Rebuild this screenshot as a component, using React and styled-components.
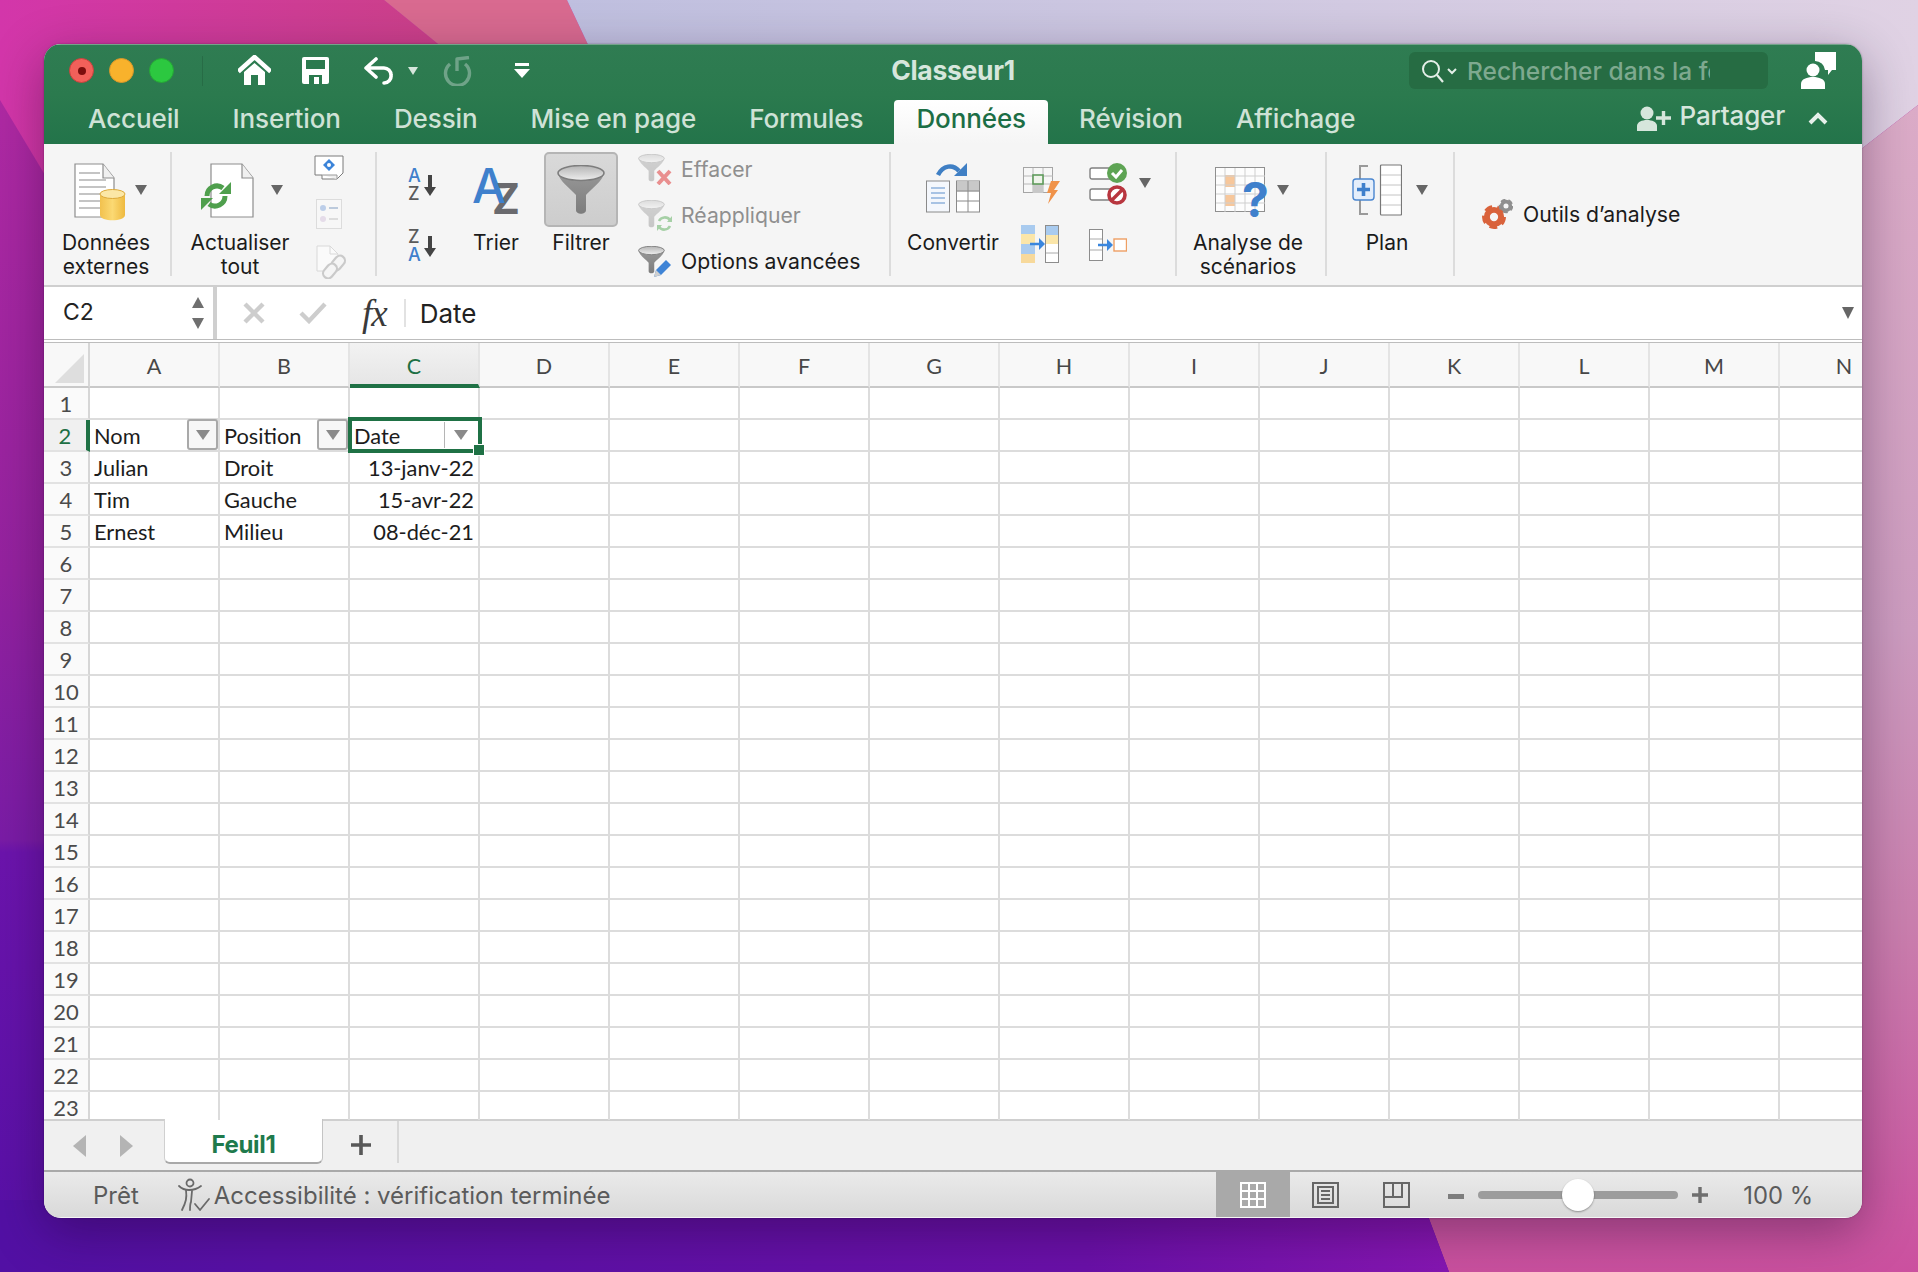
import React from "react";
import styled, { createGlobalStyle } from "styled-components";

const UI = `Inter, "Liberation Sans", sans-serif`;
const CELL = `Lato, "Liberation Sans", sans-serif`;

const Global = createGlobalStyle`
  html, body { margin: 0; padding: 0; }
  body { width: 1918px; height: 1272px; overflow: hidden; font-family: ${UI}; }
  #root { width: 1918px; height: 1272px; }
`;

const Desktop = styled.div`
  box-sizing: border-box;
  width: 1918px;
  height: 1272px;
  padding: 44px 56px 54px 44px;
  position: relative;
  overflow: hidden;
`;
const WallpaperSvg = styled.svg`
  position: absolute;
  inset: 0;
`;
const Win = styled.div`
  position: relative;
  display: flex;
  flex-direction: column;
  height: 1174px;
  border-radius: 17px;
  overflow: hidden;
  background: #f5f5f5;
  box-shadow: 0 14px 50px rgba(30, 0, 40, 0.38), 0 0 2px rgba(0, 0, 0, 0.35);
`;

/* ---------- green header ---------- */
const Header = styled.header`
  background: linear-gradient(#2f7c52 0%, #2b7a4e 50%, #23744a 100%);
  border-top: 1px solid #74a48b;
`;
const TitleBar = styled.div`
  display: grid;
  grid-template-columns: 1fr auto 1fr;
  align-items: center;
  height: 55px;
  box-sizing: border-box;
  padding-bottom: 4px;
`;
const TitleLeft = styled.div`
  display: flex;
  align-items: center;
  padding-left: 25px;
`;
const Light = styled.span`
  width: 25px;
  height: 25px;
  border-radius: 50%;
  background: ${(p) => p.$c};
  border: 1px solid ${(p) => p.$b};
  box-sizing: border-box;
  margin-right: 15px;
  display: flex;
  align-items: center;
  justify-content: center;
`;
const LightDot = styled.span`
  width: 8px;
  height: 8px;
  border-radius: 50%;
  background: #7c0d0d;
`;
const Sep = styled.span`
  width: 1px;
  height: 30px;
  background: rgba(0, 0, 0, 0.12);
  margin: 0 35px 0 13px;
`;
const Slot = styled.span`
  display: block;
  flex: none;
  line-height: 0;
  margin: ${(p) => p.$y || 0}px 0 0 ${(p) => p.$x || 0}px;
`;
const Title = styled.div`
  font-size: 26.5px;
  font-weight: 700;
  color: #d6e6dc;
  letter-spacing: -0.3px;
  margin-bottom: 1px;
`;
const TitleRight = styled.div`
  display: flex;
  align-items: center;
  justify-content: flex-end;
  padding-right: 25px;
`;
const Search = styled.div`
  display: flex;
  align-items: center;
  box-sizing: border-box;
  width: 359px;
  height: 37px;
  background: #266c43;
  border-radius: 6px;
  padding: 0 0 0 12px;
  margin-right: 33px;
`;
const SearchText = styled.span`
  display: block;
  width: 243px;
  overflow: hidden;
  white-space: nowrap;
  font-size: 24.5px;
  font-weight: 500;
  color: #7ea98f;
  margin-left: 8px;
`;
const TabRow = styled.nav`
  display: flex;
  align-items: flex-end;
  gap: 9px;
  height: 44px;
  padding-left: 22px;
`;
const Tab = styled.div`
  box-sizing: border-box;
  height: 44px;
  padding: 1px 22px 0;
  font-size: 26px;
  font-weight: 500;
  line-height: 36px;
  color: ${(p) => (p.$active ? "#1c6e45" : "#cfe2d6")};
  background: ${(p) => (p.$active ? "linear-gradient(#ffffff, #f5f5f5)" : "transparent")};
  border-radius: 4px 4px 0 0;
  letter-spacing: -0.1px;
  white-space: nowrap;
`;
const ShareArea = styled.div`
  display: flex;
  align-items: center;
  margin-left: auto;
  height: 44px;
  padding: 0 34px 4px 0;
`;
const ShareText = styled.span`
  font-size: 26px;
  font-weight: 500;
  color: #d6e6dc;
  margin: 0 23px 5px 9px;
  letter-spacing: -0.2px;
`;

/* ---------- ribbon ---------- */
const Ribbon = styled.section`
  display: flex;
  height: 143px;
  box-sizing: border-box;
  padding-top: 8px;
  background: #f5f5f5;
  border-bottom: 2px solid #cfcfcf;
`;
const Group = styled.div`
  display: flex;
  flex: none;
  box-sizing: border-box;
  width: ${(p) => p.$w}px;
  height: 124px;
  border-right: ${(p) => (p.$last ? "none" : "2px solid #dcdcdc")};
`;
const Big = styled.div`
  display: flex;
  flex-direction: column;
  flex: none;
  width: ${(p) => p.$w}px;
  margin-left: ${(p) => p.$ml || 0}px;
`;
const IconRow = styled.div`
  display: flex;
  flex: none;
  height: 79px;
  align-items: flex-start;
  border-radius: 5px;
  box-sizing: border-box;
`;
const ActiveBox = styled.div`
  display: flex;
  flex: none;
  justify-content: center;
  align-items: center;
  box-sizing: border-box;
  height: 75px;
  margin-bottom: 4px;
  background: linear-gradient(#d9d9d9, #cdcdcd);
  border: 2px solid #b5b5b5;
  border-radius: 5px;
`;
const Label = styled.div`
  font-size: 21px;
  line-height: 24px;
  color: #1b1b1b;
  text-align: center;
  white-space: nowrap;
`;
const Caret = styled.span`
  display: block;
  flex: none;
  width: 0;
  height: 0;
  border-left: 6px solid transparent;
  border-right: 6px solid transparent;
  border-top: 10px solid #666;
  margin: ${(p) => p.$y}px 0 0 ${(p) => p.$x}px;
`;
const SmallCol = styled.div`
  display: flex;
  flex-direction: column;
  margin-left: ${(p) => p.$ml}px;
`;
const ActionCol = styled.div`
  display: grid;
  grid-auto-rows: 46px;
  margin: -6px 0 0 ${(p) => p.$ml}px;
`;
const ActionRow = styled.div`
  display: flex;
  align-items: center;
  gap: 9px;
`;
const ActionText = styled.span`
  font-size: 21.2px;
  color: ${(p) => (p.$off ? "#8f8f8f" : "#1b1b1b")};
  white-space: nowrap;
`;
const ToolsItem = styled.div`
  display: flex;
  align-items: center;
  gap: 10px;
  height: 124px;
  padding: 0 0 0 27px;
`;

/* ---------- formula bar ---------- */
const FormulaBar = styled.section`
  display: flex;
  align-items: stretch;
  height: 56px;
  box-sizing: border-box;
  background: #fff;
  border-bottom: 4px double #bdbdbd;
`;
const NameBox = styled.div`
  display: flex;
  align-items: center;
  justify-content: space-between;
  box-sizing: border-box;
  width: 172px;
  margin-left: 1px;
  padding: 0 9px 0 18px;
  border-right: 4px solid #cfcfcf;
  background: #fff;
`;
const NameText = styled.span`
  font-size: 23px;
  color: #222;
  margin-bottom: 2px;
`;
const Stepper = styled.div`
  display: flex;
  flex-direction: column;
  gap: 10px;
`;
const StepTri = styled.span`
  display: block;
  width: 0;
  height: 0;
  border-left: 6.5px solid transparent;
  border-right: 6.5px solid transparent;
  ${(p) => (p.$down ? "border-top: 11px solid #6f6f6f;" : "border-bottom: 11px solid #6f6f6f;")}
`;
const FormulaTools = styled.div`
  display: flex;
  align-items: center;
  padding-left: 26px;
`;
const FxText = styled.span`
  font-family: "Liberation Serif", serif;
  font-style: italic;
  font-size: 37px;
  color: #3a3a3a;
  margin-left: 35px;
  letter-spacing: -1px;
  line-height: 1;
`;
const FxSep = styled.span`
  width: 2px;
  height: 28px;
  background: #e2e2e2;
  margin: 0 14px 0 17px;
`;
const FormulaValue = styled.span`
  font-size: 26px;
  color: #222;
  align-self: center;
`;
const FormulaCaret = styled.span`
  margin: auto 8px auto auto;
  width: 0;
  height: 0;
  border-left: 6.5px solid transparent;
  border-right: 6.5px solid transparent;
  border-top: 12px solid #666;
`;

/* ---------- sheet ---------- */
const Sheet = styled.section`
  height: 777px;
  overflow: hidden;
  background: #fff;
  font-family: ${CELL};
`;
const Row = styled.div`
  display: grid;
  grid-template-columns: 46px repeat(14, 130px);
  height: ${(p) => p.$h || 32}px;
`;
const ColHead = styled.div`
  box-sizing: border-box;
  display: flex;
  align-items: center;
  justify-content: center;
  font-size: 21.5px;
  color: ${(p) => (p.$on ? "#1d7044" : "#474747")};
  background: ${(p) => (p.$on ? "linear-gradient(#f2f2f2,#e6e6e6)" : "#f8f8f8")};
  border-right: 2px solid #e4e4e4;
  border-bottom: ${(p) => (p.$on ? "4px solid #1f7145" : "2px solid #c9c9c9")};
  padding-top: ${(p) => (p.$on ? 4 : 2)}px;
`;
const Corner = styled.div`
  box-sizing: border-box;
  display: flex;
  align-items: flex-end;
  justify-content: flex-end;
  background: #f8f8f8;
  border-right: 2px solid #d6d6d6;
  border-bottom: 2px solid #c9c9c9;
  padding: 0 4px 3px 0;
`;
const RowHead = styled.div`
  box-sizing: border-box;
  display: flex;
  align-items: center;
  justify-content: center;
  font-size: 22px;
  color: ${(p) => (p.$on ? "#1d7044" : "#4b4b4b")};
  background: ${(p) => (p.$on ? "#f0f0f0" : "#fafafa")};
  border-right: ${(p) => (p.$on ? "4px solid #1f7145" : "2px solid #d6d6d6")};
  border-bottom: 2px solid #e2e2e2;
`;
const Cell = styled.div`
  box-sizing: border-box;
  position: relative;
  display: flex;
  align-items: center;
  justify-content: ${(p) => (p.$right ? "flex-end" : "flex-start")};
  padding: 0 4px;
  font-size: 21.8px;
  color: #1c1c1c;
  white-space: nowrap;
  border-right: 2px solid #dcdcdc;
  border-bottom: 2px solid #dcdcdc;
`;
const FilterBtn = styled.span`
  position: absolute;
  right: 0;
  top: -1px;
  box-sizing: border-box;
  width: 31px;
  height: 31px;
  display: flex;
  align-items: center;
  justify-content: center;
  background: #f7f7f7;
  border: 2px solid #a9a9a9;
  border-radius: 3px;
`;
const FilterPlain = styled.span`
  position: absolute;
  right: 1px;
  top: 2px;
  width: 32px;
  height: 26px;
  display: flex;
  align-items: center;
  justify-content: center;
  border-left: 1.5px solid #b5b5b5;
`;
const FilterTri = styled.span`
  display: block;
  width: 0;
  height: 0;
  border-left: 7.5px solid transparent;
  border-right: 7.5px solid transparent;
  border-top: 10px solid #8a8a8a;
`;
const Selection = styled.span`
  position: absolute;
  z-index: 3;
  left: -2px;
  top: -3px;
  width: 134px;
  height: 36px;
  box-sizing: border-box;
  border: 4px solid #1f7145;
  pointer-events: none;
`;
const Handle = styled.span`
  position: absolute;
  right: -6px;
  bottom: -6px;
  width: 10px;
  height: 10px;
  background: #1f7145;
  outline: 1px solid #fff;
`;

/* ---------- sheet tabs ---------- */
const SheetBar = styled.section`
  display: flex;
  align-items: flex-start;
  height: 53px;
  box-sizing: border-box;
  background: #f0f0f0;
  border-top: 2px solid #cfcfcf;
  border-bottom: 2px solid #a9a9a9;
  margin-top: -1px;
`;
const NavArrow = styled.span`
  width: 0;
  height: 0;
  align-self: center;
  margin-left: ${(p) => p.$ml}px;
  border-top: 11px solid transparent;
  border-bottom: 11px solid transparent;
  ${(p) => (p.$right ? "border-left: 13px solid #b4b4b4;" : "border-right: 13px solid #b4b4b4;")}
`;
const SheetTab = styled.div`
  box-sizing: border-box;
  width: 159px;
  height: 45px;
  margin: -2px 0 0 31px;
  padding-top: 7px;
  background: #fff;
  border-bottom: 2px solid #a9a9a9;
  border-left: 1px solid #d0d0d0;
  border-right: 1px solid #c4c4c4;
  border-radius: 0 0 6px 6px;
  display: flex;
  align-items: center;
  justify-content: center;
  font-size: 24px;
  font-weight: 700;
  color: #1f7a4c;
  letter-spacing: -0.3px;
`;
const AddWrap = styled.div`
  display: flex;
  align-items: center;
  justify-content: center;
  box-sizing: border-box;
  width: 76px;
  height: 42px;
  padding: 6px 0 0 2px;
  border-right: 2px solid #d8d8d8;
`;

/* ---------- status bar ---------- */
const StatusBar = styled.footer`
  display: flex;
  align-items: center;
  height: 45px;
  background: linear-gradient(#eaeaea, #d9d9d9);
  font-size: 24px;
  color: #5b5b5b;
`;
const Ready = styled.span`
  margin: 2px 0 0 49px;
`;
const Access = styled.span`
  margin: 2px 0 0 3px;
  white-space: nowrap;
`;
const StatusRight = styled.div`
  display: flex;
  align-items: center;
  height: 100%;
  margin-left: auto;
`;
const ViewBtn = styled.div`
  display: flex;
  align-items: center;
  justify-content: center;
  width: ${(p) => p.$w}px;
  height: 100%;
  background: ${(p) => (p.$on ? "#a9a9a9" : "transparent")};
`;
const ZoomTrack = styled.div`
  position: relative;
  width: 200px;
  height: 8px;
  background: #9c9c9c;
  border-radius: 4px;
  margin: 0 14px 0 14px;
`;
const ZoomThumb = styled.span`
  position: absolute;
  left: 84px;
  top: -12px;
  width: 32px;
  height: 32px;
  border-radius: 50%;
  background: #fff;
  box-shadow: 0 1px 2px rgba(0, 0, 0, 0.35);
`;
const ZoomValue = styled.span`
  margin: 2px 49px 0 35px;
  font-size: 23.8px;
  white-space: nowrap;
`;

/* ---------- drawings ---------- */
const Wallpaper = () => (
  <WallpaperSvg width="1918" height="1272" viewBox="0 0 1918 1272">
    <defs>
      <linearGradient id="wpL" x1="0" y1="0" x2="0" y2="1">
        <stop offset="0" stopColor="#b52ba4" />
        <stop offset="0.45" stopColor="#94229f" />
        <stop offset="0.66" stopColor="#7a1ca6" />
        <stop offset="0.67" stopColor="#6c14ad" />
        <stop offset="1" stopColor="#5610a6" />
      </linearGradient>
      <linearGradient id="wpT" x1="0" y1="0" x2="1" y2="0">
        <stop offset="0" stopColor="#d336aa" />
        <stop offset="1" stopColor="#cb4187" />
      </linearGradient>
      <linearGradient id="wpLav" x1="0" y1="0" x2="1" y2="0">
        <stop offset="0" stopColor="#bfbfdf" />
        <stop offset="1" stopColor="#e0d2e4" />
      </linearGradient>
      <linearGradient id="wpR" x1="0" y1="0" x2="0" y2="1">
        <stop offset="0" stopColor="#dcacc8" />
        <stop offset="0.45" stopColor="#cd9cc0" />
        <stop offset="0.7" stopColor="#ca7fae" />
        <stop offset="1" stopColor="#cb509f" />
      </linearGradient>
      <linearGradient id="wpB" x1="0" y1="0" x2="1" y2="0">
        <stop offset="0" stopColor="#5210a4" />
        <stop offset="0.75" stopColor="#6a10a8" />
        <stop offset="1" stopColor="#8616b2" />
      </linearGradient>
    </defs>
    <rect width="1918" height="1272" fill="url(#wpL)" />
    <polygon points="0,0 384,0 470,70 60,200 0,100" fill="url(#wpT)" />
    <polygon points="384,0 567,0 600,70 470,70" fill="#d96a90" />
    <polygon points="567,0 1918,0 1918,105 1860,150 1860,70 600,70" fill="url(#wpLav)" />
    <polygon points="1860,150 1918,105 1918,1272 1449,1272 1422,1200 1860,1200" fill="url(#wpR)" />
    <polygon points="0,1200 1422,1200 1449,1272 0,1272" fill="url(#wpB)" />
  </WallpaperSvg>
);

const Home = () => (
  <svg width="33" height="31" viewBox="0 0 33 31">
    <path d="M2 15 L16.5 2 L31 15" fill="none" stroke="#fff" strokeWidth="4.5" strokeLinecap="square" />
    <path d="M6 17 L16.5 8 L27 17 V30 H20 V20 H13 V30 H6Z" fill="#fff" />
  </svg>
);
const Save = () => (
  <svg width="29" height="29" viewBox="0 0 29 29">
    <path d="M1 3 a2 2 0 0 1 2-2 H26 a2 2 0 0 1 2 2 V26 a2 2 0 0 1-2 2 H3 a2 2 0 0 1-2-2Z" fill="#fff" />
    <rect x="5" y="4" width="19" height="9" fill="#2b7a4e" />
    <rect x="8" y="19" width="13" height="9" fill="#2b7a4e" />
    <rect x="13" y="21" width="5" height="7" fill="#fff" />
  </svg>
);
const Undo = () => (
  <svg width="32" height="28" viewBox="0 0 32 28">
    <path d="M13 2 L3 11 L13 20 M3 11 H21 a7 7 0 0 1 7 7 a7 7 0 0 1-7 8" fill="none" stroke="#fff" strokeWidth="3.6" strokeLinecap="round" strokeLinejoin="round" />
  </svg>
);
const Redo = () => (
  <svg width="31" height="30" viewBox="0 0 31 30">
    <path d="M8 8 A12 12 0 1 0 23 8" fill="none" stroke="#6fa388" strokeWidth="3.4" />
    <path d="M15 15 V3 L27 1.5" fill="none" stroke="#6fa388" strokeWidth="3.4" strokeLinejoin="round" />
  </svg>
);
const SmallTri = () => (
  <svg width="10" height="8" viewBox="0 0 10 8"><path d="M0 0H10L5 8Z" fill="#d6e6dc" /></svg>
);
const Customize = () => (
  <svg width="16" height="15" viewBox="0 0 16 15">
    <rect x="1" y="0" width="14" height="3" fill="#fff" />
    <path d="M0 6H16L8 15Z" fill="#fff" />
  </svg>
);
const SearchIcon = () => (
  <svg width="38" height="24" viewBox="0 0 38 24">
    <circle cx="10" cy="10" r="8" fill="none" stroke="#e4efe8" strokeWidth="2" />
    <path d="M16 16 L22 23" stroke="#e4efe8" strokeWidth="2.2" />
    <path d="M27 10 L31 14 L35 10" fill="none" stroke="#e4efe8" strokeWidth="2" />
  </svg>
);
const PersonChat = () => (
  <svg width="36" height="37" viewBox="0 0 36 37">
    <path d="M14 0 H35 V18 H31 L27 23 V18 H24 A10 10 0 0 0 14 9Z" fill="#fff" />
    <circle cx="12" cy="18" r="6.5" fill="#fff" />
    <path d="M0 37 V32 C0 27 6 25 12 25 C18 25 24 27 24 32 V37Z" fill="#fff" />
  </svg>
);
const PersonPlus = () => (
  <svg width="34" height="25" viewBox="0 0 34 25">
    <circle cx="10" cy="7" r="6.5" fill="#d6e6dc" />
    <path d="M0 25 V20 C0 16 5 14 10 14 C15 14 20 16 20 20 V25Z" fill="#d6e6dc" />
    <path d="M19 12 H34 M26.5 5 V19" stroke="#d6e6dc" strokeWidth="3.4" />
  </svg>
);
const ChevronUp = () => (
  <svg width="20" height="14" viewBox="0 0 20 14">
    <path d="M2 11 L10 3 L18 11" fill="none" stroke="#e6f0ea" strokeWidth="4" />
  </svg>
);

const PageIcon = ({ children, w = 41, h = 54 }) => (
  <>
    <path d={`M1 1H${w - 12}L${w - 1} 15V${h}H1Z`} fill="#fff" stroke="#8d8d8d" strokeWidth="1.2" />
    <path d={`M${w - 12} 1V15H${w - 1}`} fill="#f0f0f0" stroke="#8d8d8d" strokeWidth="1.2" />
    {children}
  </>
);
const DataIcon = () => (
  <svg width="52" height="58" viewBox="0 0 52 58">
    <defs>
      <linearGradient id="cyl" x1="0" y1="0" x2="1" y2="0">
        <stop offset="0" stopColor="#f2c14e" />
        <stop offset="0.5" stopColor="#fbd973" />
        <stop offset="1" stopColor="#eeb93f" />
      </linearGradient>
    </defs>
    <PageIcon w={41} h={54}>
      {[10, 17, 24, 31, 38, 45].map((y) => (
        <path key={y} d={`M5 ${y}H${y < 15 ? 26 : 32}`} stroke="#b0b0b0" strokeWidth="1.6" />
      ))}
    </PageIcon>
    <path d="M26 32 V52 C26 59 51 59 51 52 V32Z" fill="url(#cyl)" />
    <ellipse cx="38.5" cy="31" rx="12.5" ry="4.5" fill="#fbe7a6" stroke="#dca93a" />
  </svg>
);
const RefreshIcon = () => (
  <svg width="54" height="55" viewBox="0 0 54 55">
    <g transform="translate(9,0)"><PageIcon w={44} h={54} /></g>
    <path d="M6 33 A10 10 0 0 1 22 25" fill="none" stroke="#4f9f4d" strokeWidth="5" />
    <path d="M18 31 H30 V19Z" fill="#4f9f4d" />
    <path d="M24 33 A10 10 0 0 1 8 41" fill="none" stroke="#4f9f4d" strokeWidth="5" />
    <path d="M12 35 H0 V47Z" fill="#4f9f4d" />
  </svg>
);
const ConnIcon = () => (
  <svg width="30" height="27" viewBox="0 0 30 27">
    <path d="M1 1H29V18L23 24H8V20H1Z" fill="#fff" stroke="#7a7a7a" />
    <path d="M8 20H23V24" fill="#eee" stroke="#999" />
    <path d="M15 4 L21 10 L15 16 L9 10Z" fill="#3b84d9" />
    <circle cx="15" cy="10" r="2" fill="#fff" />
  </svg>
);
const PropsIcon = () => (
  <svg width="26" height="30" viewBox="0 0 26 30" opacity="0.55">
    <rect x="0.5" y="0.5" width="25" height="29" fill="#fafafa" stroke="#c8c8c8" />
    <circle cx="7" cy="9" r="3" fill="#8fb0e0" />
    <path d="M13 9H22" stroke="#8fa8c8" strokeWidth="2" />
    <circle cx="7" cy="20" r="3" fill="#d8c8e0" />
    <path d="M13 20H22" stroke="#c8c8c8" strokeWidth="2" />
  </svg>
);
const LinkIcon = () => (
  <svg width="32" height="34" viewBox="0 0 32 34" opacity="0.5">
    <path d="M1 1H14L22 9V26H1Z" fill="#fff" stroke="#bdbdbd" />
    <path d="M14 1V9H22" fill="none" stroke="#bdbdbd" />
    <g fill="#f5f5f5" stroke="#a0a0a0" strokeWidth="2.2">
      <rect x="17" y="10" width="10" height="16" rx="5" transform="rotate(40 22 18)" />
      <rect x="9" y="18" width="10" height="16" rx="5" transform="rotate(40 14 26)" />
    </g>
  </svg>
);
const IconLetter = styled.text`
  font-family: ${UI};
  font-weight: 500;
`;
const SortIcon = ({ top, bottom, topC, botC, h = 36 }) => (
  <svg width="34" height={h} viewBox={`0 0 34 ${h}`}>
    <IconLetter x="1" y="15" fontSize="18" fill={topC}>{top}</IconLetter>
    <IconLetter x="1" y={h - 3} fontSize="18" fill={botC}>{bottom}</IconLetter>
    <path d="M23 8 V23" stroke="#444" strokeWidth="4" />
    <path d="M17 20 H29 L23 29Z" fill="#444" />
  </svg>
);
const BigAZ = () => (
  <svg width="50" height="50" viewBox="0 0 50 50">
    <IconLetter x="19" y="48" fontSize="42" fill="#6a6a6e" style={{ fontWeight: 700 }}>Z</IconLetter>
    <IconLetter x="-1" y="37" fontSize="48" fill="#3f80cc" style={{ fontWeight: 500 }}>A</IconLetter>
  </svg>
);
const funnelBody = "M1 8 C2 16 14 24 19 30 V45 C19 50 29 50 29 45 V30 C34 24 46 16 47 8Z";
const FunnelDefs = ({ id }) => (
  <defs>
    <linearGradient id={id + "b"} x1="0" y1="0" x2="0" y2="1">
      <stop offset="0" stopColor="#979797" />
      <stop offset="1" stopColor="#7c7c7c" />
    </linearGradient>
    <linearGradient id={id + "t"} x1="0" y1="0" x2="0" y2="1">
      <stop offset="0" stopColor="#b4b4b4" />
      <stop offset="1" stopColor="#eeeeee" />
    </linearGradient>
  </defs>
);
const FunnelShape = ({ id }) => (
  <>
    <path d={funnelBody} fill={`url(#${id}b)`} />
    <ellipse cx="24" cy="8" rx="23" ry="7.5" fill={`url(#${id}t)`} stroke="#7d7d7d" strokeWidth="1.6" />
  </>
);
const Funnel = ({ id }) => (
  <svg width="48" height="50" viewBox="0 0 48 50">
    <FunnelDefs id={id} />
    <FunnelShape id={id} />
  </svg>
);
const SmallFunnel = ({ id, dim, children }) => (
  <svg width="34" height="31" viewBox="0 0 34 31">
    <FunnelDefs id={id} />
    <g transform="scale(0.56)" opacity={dim ? 0.38 : 1}>
      <FunnelShape id={id} />
    </g>
    {children}
  </svg>
);
const ConvertIcon = () => (
  <svg width="54" height="50" viewBox="0 0 54 50">
    <path d="M12 12 C17 2 27 1 33 8" fill="none" stroke="#3f7fc4" strokeWidth="4.5" />
    <path d="M41 0 V13 H28Z" fill="#3f7fc4" />
    <rect x="0.5" y="18" width="23" height="31" fill="#f4f7fc" stroke="#8a8a8a" />
    {[25, 30, 35, 40].map((y) => (
      <path key={y} d={`M5 ${y}H19`} stroke="#8fb2dc" strokeWidth="1.6" />
    ))}
    <rect x="30.5" y="18" width="23" height="31" fill="#fff" stroke="#8a8a8a" />
    <rect x="31" y="18.5" width="22" height="10" fill="#c8c8c8" />
    <path d="M42 18V49M31 28H53M31 38H53" stroke="#8a8a8a" />
  </svg>
);
const FlashIcon = () => (
  <svg width="38" height="38" viewBox="0 0 38 38">
    <rect x="0.5" y="0.5" width="29" height="25" fill="#f7f7f7" stroke="#a5a5a5" />
    <path d="M10 1V26M20 1V26M1 9H30M1 17H30" stroke="#b8b8b8" />
    <rect x="10" y="17" width="10" height="9" fill="#c8c8c8" />
    <rect x="10" y="8" width="10" height="9" fill="#eef3ea" stroke="#5e9b5b" strokeWidth="1.6" />
    <path d="M28 14 H37 L31 23 H35 L25 37 L28 26 H24Z" fill="#f0934a" />
  </svg>
);
const ValidateIcon = () => (
  <svg width="40" height="42" viewBox="0 0 40 42">
    <rect x="1" y="5" width="28" height="11" rx="2" fill="#fff" stroke="#808080" strokeWidth="1.4" />
    <rect x="1" y="26" width="28" height="11" rx="2" fill="#fff" stroke="#808080" strokeWidth="1.4" />
    <circle cx="28" cy="10" r="10" fill="#5ea454" />
    <path d="M23 10 L27 14 L33 7" fill="none" stroke="#fff" strokeWidth="3" />
    <circle cx="28" cy="32" r="8" fill="#fff" stroke="#b8363f" strokeWidth="3.6" />
    <path d="M23 37 L33 27" stroke="#b8363f" strokeWidth="3.4" />
  </svg>
);
const ConsolidateIcon = () => (
  <svg width="38" height="38" viewBox="0 0 38 38">
    <rect x="0" y="0" width="14" height="9" fill="#a9cbef" />
    <rect x="0" y="9" width="14" height="10" fill="#fbe6a9" />
    <rect x="0" y="19" width="14" height="10" fill="#a9cbef" />
    <rect x="0" y="29" width="14" height="9" fill="#f7d99b" />
    <rect x="24.5" y="0.5" width="13" height="37" fill="#fff" stroke="#8d8d8d" />
    <rect x="25" y="1" width="12" height="9" fill="#a9cbef" />
    <rect x="25" y="10" width="12" height="9" fill="#fbe6a9" />
    <path d="M25 28H37" stroke="#aaa" />
    <path d="M9 19 H18" stroke="#3a86dd" strokeWidth="2.6" />
    <path d="M18 13 L24 19 L18 25Z" fill="#3a86dd" />
  </svg>
);
const RelationIcon = () => (
  <svg width="38" height="32" viewBox="0 0 38 32">
    <rect x="0.5" y="0.5" width="13" height="31" fill="#fff" stroke="#8d8d8d" />
    <path d="M1 10H13M1 21H13" stroke="#aaa" />
    <path d="M9 16 H19" stroke="#3a86dd" strokeWidth="2.6" />
    <path d="M18 10 L24 16 L18 22Z" fill="#3a86dd" />
    <rect x="25" y="10" width="12.5" height="12" fill="#fff" stroke="#ee9f64" strokeWidth="1.4" />
  </svg>
);
const WhatIfIcon = () => (
  <svg width="56" height="52" viewBox="0 0 56 52">
    <rect x="0.5" y="0.5" width="49" height="44" fill="#fdfdfd" stroke="#8f8f8f" />
    <rect x="10" y="8" width="10" height="12" fill="#f7c79b" />
    <rect x="10" y="28" width="10" height="11" fill="#f7c79b" />
    <path d="M10 1V45M20 1V45M30 1V45M40 1V45M1 9H50M1 18H50M1 27H50M1 36H50" stroke="#cfcfcf" />
    <IconLetter x="27" y="50" fontSize="48" fill="#3f80cc" style={{ fontWeight: 700 }}>?</IconLetter>
  </svg>
);
const PlanIcon = () => (
  <svg width="50" height="52" viewBox="0 0 50 52">
    <path d="M16 2 H8 V50 H16" fill="none" stroke="#9a9a9a" strokeWidth="2" />
    <rect x="1" y="15" width="21" height="21" rx="3" fill="#e4eefb" stroke="#4a86d0" strokeWidth="1.4" />
    <path d="M11.5 19 V32 M5 25.5 H18" stroke="#3f80cc" strokeWidth="3.6" />
    <rect x="28.5" y="1" width="21" height="50" rx="1" fill="#fff" stroke="#777" strokeWidth="1.2" />
    <path d="M29 11H49M29 21H49M29 31H49M29 41H49" stroke="#c4c4c4" />
  </svg>
);
const Gear = ({ cx, cy, r, c }) => (
  <g>
    <circle cx={cx} cy={cy} r={r * 0.62} fill="none" stroke={c} strokeWidth={r * 0.52} />
    <circle
      cx={cx}
      cy={cy}
      r={r * 0.88}
      fill="none"
      stroke={c}
      strokeWidth={r * 0.32}
      strokeDasharray={`${r * 0.66} ${r * 0.44}`}
    />
  </g>
);
const GearsIcon = () => (
  <svg width="31" height="30" viewBox="0 0 31 30">
    <Gear cx={12} cy={18} r={11.5} c="#d9623b" />
    <Gear cx={24} cy={7} r={7} c="#8f8f8f" />
  </svg>
);
const CrossIcon = () => (
  <svg width="22" height="22" viewBox="0 0 22 22">
    <path d="M2 2 L20 20 M20 2 L2 20" stroke="#cdcdcd" strokeWidth="4.4" />
  </svg>
);
const CheckIcon = () => (
  <svg width="28" height="22" viewBox="0 0 28 22">
    <path d="M2 11 L10 19 L26 2" fill="none" stroke="#cdcdcd" strokeWidth="4.4" />
  </svg>
);
const CornerTri = () => (
  <svg width="29" height="29" viewBox="0 0 29 29"><path d="M29 0V29H0Z" fill="#dedede" /></svg>
);
const PlusIcon = () => (
  <svg width="22" height="22" viewBox="0 0 22 22"><path d="M11 1V21M1 11H21" stroke="#585858" strokeWidth="3.6" /></svg>
);
const AccessIcon = () => (
  <svg width="34" height="34" viewBox="0 0 34 34" fill="none" stroke="#6a6a6a" strokeWidth="1.8" strokeLinecap="round" strokeLinejoin="round">
    <circle cx="13" cy="5" r="3.5" />
    <path d="M2 8 C6 12 9 12 12 12 C15 12 19 12 24 8" />
    <path d="M9 12 C10 20 9 24 5 32 M15 13 L14 24 C13 26 13 28 13 32" />
    <path d="M18 26 L23 32 L32 21" />
  </svg>
);
const GridView = () => (
  <svg width="26" height="26" viewBox="0 0 26 26">
    <rect width="26" height="26" fill="#fff" />
    <g fill="#a9a9a9">
      {[2, 10, 18].map((y) =>
        [2, 10, 18].map((x) => <rect key={`${x}-${y}`} x={x} y={y} width="6" height="6" />)
      )}
    </g>
  </svg>
);
const PageView = () => (
  <svg width="27" height="26" viewBox="0 0 27 26" fill="none" stroke="#666" strokeWidth="2">
    <rect x="1" y="1" width="25" height="24" />
    <rect x="6" y="5" width="15" height="16" />
    <path d="M9 9H18M9 13H18M9 17H18" />
  </svg>
);
const BreakView = () => (
  <svg width="27" height="26" viewBox="0 0 27 26" fill="none" stroke="#666" strokeWidth="2">
    <rect x="1" y="1" width="25" height="24" />
    <path d="M1 15H19V1M10 1V15" />
  </svg>
);
const MinusIcon = () => (
  <svg width="16" height="5" viewBox="0 0 16 5"><rect width="16" height="5" fill="#7d7d7d" /></svg>
);
const ZoomPlus = () => (
  <svg width="16" height="16" viewBox="0 0 16 16"><path d="M8 0V16M0 8H16" stroke="#6e6e6e" strokeWidth="3.4" /></svg>
);

/* ---------- data ---------- */
const TABS = ["Accueil", "Insertion", "Dessin", "Mise en page", "Formules", "Données", "Révision", "Affichage"];
const COLS = ["A", "B", "C", "D", "E", "F", "G", "H", "I", "J", "K", "L", "M", "N"];
const ROWS = Array.from({ length: 23 }, (_, i) => i + 1);
const DATA = {
  3: ["Julian", "Droit", "13-janv-22"],
  4: ["Tim", "Gauche", "15-avr-22"],
  5: ["Ernest", "Milieu", "08-déc-21"],
};

const DataRow = ({ n }) => (
  <Row>
    <RowHead $on={n === 2}>{n}</RowHead>
    {COLS.map((c, i) => {
      if (n === 2 && i === 0) return <Cell key={c}>Nom<FilterBtn><FilterTri /></FilterBtn></Cell>;
      if (n === 2 && i === 1) return <Cell key={c}>Position<FilterBtn><FilterTri /></FilterBtn></Cell>;
      if (n === 2 && i === 2)
        return (
          <Cell key={c}>
            Date
            <FilterPlain><FilterTri /></FilterPlain>
            <Selection><Handle /></Selection>
          </Cell>
        );
      const v = DATA[n] && DATA[n][i];
      return <Cell key={c} $right={i === 2}>{v}</Cell>;
    })}
  </Row>
);

export default function App() {
  return (
    <Desktop>
      <Global />
      <Wallpaper />
      <Win>
        <Header>
          <TitleBar>
            <TitleLeft>
              <Light $c="#f2605a" $b="#c9423d"><LightDot /></Light>
              <Light $c="#f8b22c" $b="#d7962a" />
              <Light $c="#2cc840" $b="#25a636" />
              <Sep />
              <Slot><Home /></Slot>
              <Slot $x={30}><Save /></Slot>
              <Slot $x={33}><Undo /></Slot>
              <Slot $x={13}><SmallTri /></Slot>
              <Slot $x={24}><Redo /></Slot>
              <Slot $x={41}><Customize /></Slot>
            </TitleLeft>
            <Title>Classeur1</Title>
            <TitleRight>
              <Search>
                <SearchIcon />
                <SearchText>Rechercher dans la feuille</SearchText>
              </Search>
              <PersonChat />
            </TitleRight>
          </TitleBar>
          <TabRow>
            {TABS.map((t) => (
              <Tab key={t} $active={t === "Données"}>{t}</Tab>
            ))}
            <ShareArea>
              <PersonPlus />
              <ShareText>Partager</ShareText>
              <Slot $y={2}><ChevronUp /></Slot>
            </ShareArea>
          </TabRow>
        </Header>

        <Ribbon>
          <Group $w={128}>
            <Big $w={124}>
              <IconRow>
                <Slot $x={30} $y={11}><DataIcon /></Slot>
                <Caret $x={9} $y={33} />
              </IconRow>
              <Label>Données<br />externes</Label>
            </Big>
          </Group>
          <Group $w={205}>
            <Big $w={136}>
              <IconRow>
                <Slot $x={29} $y={11}><RefreshIcon /></Slot>
                <Caret $x={16} $y={33} />
              </IconRow>
              <Label>Actualiser<br />tout</Label>
            </Big>
            <SmallCol $ml={6}>
              <Slot $y={3}><ConnIcon /></Slot>
              <Slot $x={2} $y={17}><PropsIcon /></Slot>
              <Slot $x={2} $y={16}><LinkIcon /></Slot>
            </SmallCol>
          </Group>
          <Group $w={514}>
            <SmallCol $ml={30}>
              <Slot $y={15}><SortIcon top="A" bottom="Z" topC="#3f80cc" botC="#5a5a5a" /></Slot>
              <Slot $y={25}><SortIcon top="Z" bottom="A" topC="#5a5a5a" botC="#3f80cc" /></Slot>
            </SmallCol>
            <Big $w={82} $ml={14}>
              <IconRow>
                <Slot $x={18} $y={14}><BigAZ /></Slot>
              </IconRow>
              <Label>Trier</Label>
            </Big>
            <Big $w={74} $ml={7}>
              <ActiveBox><Funnel id="big" /></ActiveBox>
              <Label>Filtrer</Label>
            </Big>
            <ActionCol $ml={20}>
              <ActionRow>
                <SmallFunnel id="a" dim>
                  <path d="M20 17 L32 30 M32 17 L20 30" stroke="#e98f8f" strokeWidth="4" />
                </SmallFunnel>
                <ActionText $off>Effacer</ActionText>
              </ActionRow>
              <ActionRow>
                <SmallFunnel id="b" dim>
                  <path d="M21 21 A6.5 6.5 0 0 1 32 20 M32 26 A6.5 6.5 0 0 1 21 27" fill="none" stroke="#a6d0a6" strokeWidth="2.6" />
                  <path d="M29 22 H34 V16Z M24 25 H19 V31Z" fill="#a6d0a6" />
                </SmallFunnel>
                <ActionText $off>Réappliquer</ActionText>
              </ActionRow>
              <ActionRow>
                <SmallFunnel id="c">
                  <path d="M16 31 L18 24 L28 14 L33 19 L23 29Z" fill="#3f84d6" />
                  <path d="M16 31 L18 24 L23 29Z" fill="#cfcfcf" />
                </SmallFunnel>
                <ActionText>Options avancées</ActionText>
              </ActionRow>
            </ActionCol>
          </Group>
          <Group $w={286}>
            <Big $w={124}>
              <IconRow>
                <Slot $x={35} $y={11}><ConvertIcon /></Slot>
              </IconRow>
              <Label>Convertir</Label>
            </Big>
            <SmallCol $ml={6}>
              <Slot $x={2} $y={15}><FlashIcon /></Slot>
              <Slot $y={20}><ConsolidateIcon /></Slot>
            </SmallCol>
            <SmallCol $ml={28}>
              <Slot $y={11}><ValidateIcon /></Slot>
              <Slot $y={24}><RelationIcon /></Slot>
            </SmallCol>
            <Caret $x={10} $y={26} />
          </Group>
          <Group $w={150}>
            <Big $w={142}>
              <IconRow>
                <Slot $x={38} $y={15}><WhatIfIcon /></Slot>
                <Caret $x={6} $y={33} />
              </IconRow>
              <Label>Analyse de<br />scénarios</Label>
            </Big>
          </Group>
          <Group $w={128}>
            <Big $w={120}>
              <IconRow>
                <Slot $x={25} $y={12}><PlanIcon /></Slot>
                <Caret $x={14} $y={33} />
              </IconRow>
              <Label>Plan</Label>
            </Big>
          </Group>
          <Group $w={400} $last>
            <ToolsItem>
              <GearsIcon />
              <ActionText>Outils d’analyse</ActionText>
            </ToolsItem>
          </Group>
        </Ribbon>

        <FormulaBar>
          <NameBox>
            <NameText>C2</NameText>
            <Stepper><StepTri /><StepTri $down /></Stepper>
          </NameBox>
          <FormulaTools>
            <CrossIcon />
            <Slot $x={34}><CheckIcon /></Slot>
            <FxText>fx</FxText>
            <FxSep />
            <FormulaValue>Date</FormulaValue>
          </FormulaTools>
          <FormulaCaret />
        </FormulaBar>

        <Sheet>
          <Row $h={45}>
            <Corner><CornerTri /></Corner>
            {COLS.map((c) => (
              <ColHead key={c} $on={c === "C"}>{c}</ColHead>
            ))}
          </Row>
          {ROWS.map((n) => <DataRow key={n} n={n} />)}
        </Sheet>

        <SheetBar>
          <NavArrow $ml={29} />
          <NavArrow $ml={34} $right />
          <SheetTab>Feuil1</SheetTab>
          <AddWrap><PlusIcon /></AddWrap>
        </SheetBar>

        <StatusBar>
          <Ready>Prêt</Ready>
          <Slot $x={38}><AccessIcon /></Slot>
          <Access>Accessibilité : vérification terminée</Access>
          <StatusRight>
            <ViewBtn $w={74} $on><GridView /></ViewBtn>
            <ViewBtn $w={70}><PageView /></ViewBtn>
            <ViewBtn $w={72}><BreakView /></ViewBtn>
            <Slot $x={16}><MinusIcon /></Slot>
            <ZoomTrack><ZoomThumb /></ZoomTrack>
            <ZoomPlus />
            <ZoomValue>100 %</ZoomValue>
          </StatusRight>
        </StatusBar>
      </Win>
    </Desktop>
  );
}
